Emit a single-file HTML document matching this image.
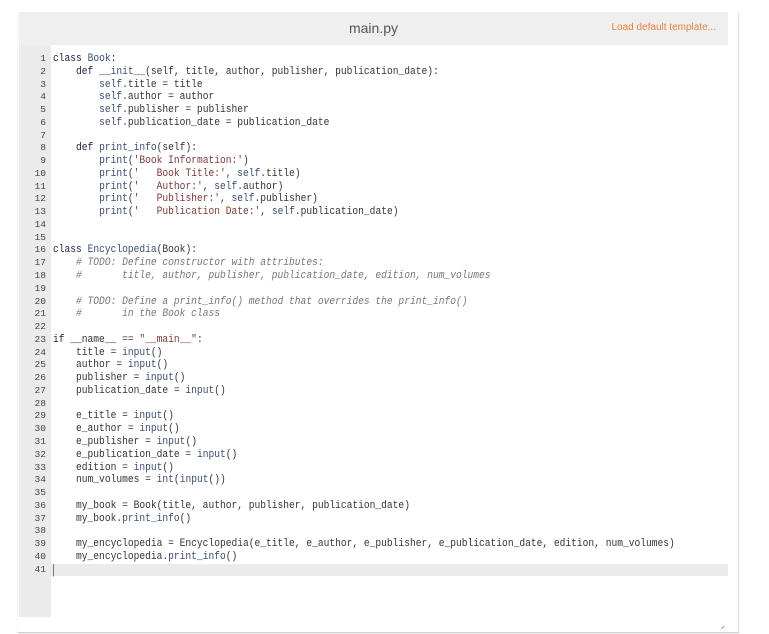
<!DOCTYPE html>
<html><head><style>
body{margin:0;background:#fff;width:769px;height:634px;overflow:hidden;position:relative;font-family:"Liberation Sans",sans-serif}
.panel{position:absolute;left:18px;top:12px;width:720px;height:620px;border-right:1px solid #e4e4e4;border-bottom:1px solid #d0d0d0;box-shadow:0 1px 2px rgba(0,0,0,.1)}
.hdr{position:absolute;left:1px;top:0;width:709px;height:33px;background:#efefef}
.title{position:absolute;left:0;width:100%;top:8px;text-align:center;font-size:14px;color:#555}
.load{position:absolute;right:12px;top:10px;font-size:10px;color:#e8823a}
.gut{position:absolute;left:1px;top:33px;width:32px;height:572px;background:#ebebeb}
.code{position:absolute;left:1px;top:41px;width:709px;font-family:"Liberation Mono",monospace;font-size:9.6px;line-height:12.78px;color:#333}
.l{position:relative;height:12.78px;white-space:pre}
.n{position:absolute;left:0;width:27px;text-align:right;color:#444}
.t{position:absolute;left:34px;transform:scaleY(1.12);transform-origin:0 60%}
.cur{background:#ebebeb}
.k{color:#222244}.f{color:#3a4c70}.s{color:#7a3a3a}.c{color:#777;font-style:italic}
.grip{position:absolute;right:14px;bottom:4px;width:4px;height:4px;border-right:1px solid #999;transform:rotate(45deg)}
</style></head><body>
<div class="panel">
<div class="hdr"><div class="title">main.py</div><div class="load">Load default template...</div></div>
<div class="gut"></div>
<div class="code">
<div class="l"><span class="n">1</span><span class="t"><span class="k">class</span> <span class="f">Book</span>:</span></div>
<div class="l"><span class="n">2</span><span class="t">    <span class="k">def</span> <span class="f">__init__</span>(self, title, author, publisher, publication_date):</span></div>
<div class="l"><span class="n">3</span><span class="t">        <span class="f">self</span>.title = title</span></div>
<div class="l"><span class="n">4</span><span class="t">        <span class="f">self</span>.author = author</span></div>
<div class="l"><span class="n">5</span><span class="t">        <span class="f">self</span>.publisher = publisher</span></div>
<div class="l"><span class="n">6</span><span class="t">        <span class="f">self</span>.publication_date = publication_date</span></div>
<div class="l"><span class="n">7</span><span class="t"></span></div>
<div class="l"><span class="n">8</span><span class="t">    <span class="k">def</span> <span class="f">print_info</span>(self):</span></div>
<div class="l"><span class="n">9</span><span class="t">        <span class="f">print</span>(<span class="s">'Book Information:'</span>)</span></div>
<div class="l"><span class="n">10</span><span class="t">        <span class="f">print</span>(<span class="s">'   Book Title:'</span>, <span class="f">self</span>.title)</span></div>
<div class="l"><span class="n">11</span><span class="t">        <span class="f">print</span>(<span class="s">'   Author:'</span>, <span class="f">self</span>.author)</span></div>
<div class="l"><span class="n">12</span><span class="t">        <span class="f">print</span>(<span class="s">'   Publisher:'</span>, <span class="f">self</span>.publisher)</span></div>
<div class="l"><span class="n">13</span><span class="t">        <span class="f">print</span>(<span class="s">'   Publication Date:'</span>, <span class="f">self</span>.publication_date)</span></div>
<div class="l"><span class="n">14</span><span class="t"></span></div>
<div class="l"><span class="n">15</span><span class="t"></span></div>
<div class="l"><span class="n">16</span><span class="t"><span class="k">class</span> <span class="f">Encyclopedia</span>(Book):</span></div>
<div class="l"><span class="n">17</span><span class="t">    <span class="c"># TODO: Define constructor with attributes:</span></span></div>
<div class="l"><span class="n">18</span><span class="t">    <span class="c">#       title, author, publisher, publication_date, edition, num_volumes</span></span></div>
<div class="l"><span class="n">19</span><span class="t"></span></div>
<div class="l"><span class="n">20</span><span class="t">    <span class="c"># TODO: Define a print_info() method that overrides the print_info()</span></span></div>
<div class="l"><span class="n">21</span><span class="t">    <span class="c">#       in the Book class</span></span></div>
<div class="l"><span class="n">22</span><span class="t"></span></div>
<div class="l"><span class="n">23</span><span class="t"><span class="k">if</span> __name__ == <span class="s">"__main__"</span>:</span></div>
<div class="l"><span class="n">24</span><span class="t">    title = <span class="f">input</span>()</span></div>
<div class="l"><span class="n">25</span><span class="t">    author = <span class="f">input</span>()</span></div>
<div class="l"><span class="n">26</span><span class="t">    publisher = <span class="f">input</span>()</span></div>
<div class="l"><span class="n">27</span><span class="t">    publication_date = <span class="f">input</span>()</span></div>
<div class="l"><span class="n">28</span><span class="t"></span></div>
<div class="l"><span class="n">29</span><span class="t">    e_title = <span class="f">input</span>()</span></div>
<div class="l"><span class="n">30</span><span class="t">    e_author = <span class="f">input</span>()</span></div>
<div class="l"><span class="n">31</span><span class="t">    e_publisher = <span class="f">input</span>()</span></div>
<div class="l"><span class="n">32</span><span class="t">    e_publication_date = <span class="f">input</span>()</span></div>
<div class="l"><span class="n">33</span><span class="t">    edition = <span class="f">input</span>()</span></div>
<div class="l"><span class="n">34</span><span class="t">    num_volumes = <span class="f">int</span>(<span class="f">input</span>())</span></div>
<div class="l"><span class="n">35</span><span class="t"></span></div>
<div class="l"><span class="n">36</span><span class="t">    my_book = Book(title, author, publisher, publication_date)</span></div>
<div class="l"><span class="n">37</span><span class="t">    my_book.<span class="f">print_info</span>()</span></div>
<div class="l"><span class="n">38</span><span class="t"></span></div>
<div class="l"><span class="n">39</span><span class="t">    my_encyclopedia = Encyclopedia(e_title, e_author, e_publisher, e_publication_date, edition, num_volumes)</span></div>
<div class="l"><span class="n">40</span><span class="t">    my_encyclopedia.<span class="f">print_info</span>()</span></div>
<div class="l cur"><span class="n">41</span><span class="t" style="border-left:1px solid #777;height:11px;top:1px"></span></div>
</div>
<div class="grip"></div>
</div>
</body></html>
